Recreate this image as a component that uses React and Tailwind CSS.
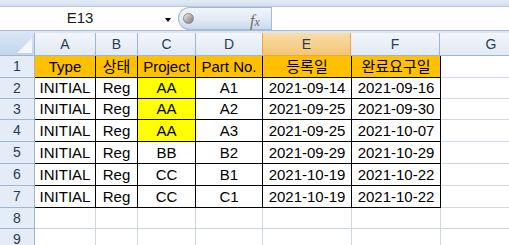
import React from "react";

const COLS = [
  { key: "A", w: 61 },
  { key: "B", w: 42 },
  { key: "C", w: 58 },
  { key: "D", w: 67 },
  { key: "E", w: 89 },
  { key: "F", w: 89 },
  { key: "G", w: 103 },
];

const ROW_H = [22, 21, 21, 22, 22, 22, 22, 21, 21];

const HEADER = ["Type", "상태", "Project", "Part No.", "등록일", "완료요구일"];

const DATA = [
  ["INITIAL", "Reg", "AA", "A1", "2021-09-14", "2021-09-16"],
  ["INITIAL", "Reg", "AA", "A2", "2021-09-25", "2021-09-30"],
  ["INITIAL", "Reg", "AA", "A3", "2021-09-25", "2021-10-07"],
  ["INITIAL", "Reg", "BB", "B2", "2021-09-29", "2021-10-29"],
  ["INITIAL", "Reg", "CC", "B1", "2021-10-19", "2021-10-22"],
  ["INITIAL", "Reg", "CC", "C1", "2021-10-19", "2021-10-22"],
];

const FONT = { fontFamily: '"Liberation Sans", "Noto Sans CJK KR", sans-serif' };

function FormulaBar() {
  return (
    <div className="flex flex-col">
      <div className="h-[7px] bg-gradient-to-b from-[#e3ecf7] to-[#d3dfee] border-b border-[#b9c9dd]" />
      <div className="flex h-[24px] bg-white border-b border-[#a9bcd3]">
        <div className="relative w-[178px] flex items-center">
          <span className="w-[160px] text-center text-[15px] text-[#1a1a1a]" style={FONT}>
            E13
          </span>
          <span className="absolute left-[165px] top-[11px] w-0 h-0 border-l-[3.5px] border-r-[3.5px] border-t-[4px] border-l-transparent border-r-transparent border-t-black" />
        </div>
        <div className="w-[93px] h-full rounded-l-[12px] border border-r-0 border-[#a7bad2] bg-gradient-to-b from-[#f1f5fb] via-[#e3ebf6] to-[#cbd9eb] flex items-center relative">
          <span className="ml-[4px] w-[11px] h-[11px] rounded-full bg-gradient-to-br from-[#f0f0f0] via-[#b0b0b0] to-[#7d7d7d] border border-[#8a8a8a]" />
          <span
            className="absolute left-[71px] top-[1px] text-[16px] italic text-[#6a6a6a]"
            style={{ fontFamily: '"Liberation Serif", serif' }}
          >
            f<span className="text-[12px]">x</span>
          </span>
        </div>
        <div className="flex-1 border-l border-[#a7bad2] bg-white" />
      </div>
      <div className="h-[2px] bg-[#dce6f3]" />
    </div>
  );
}

function ColumnHeader() {
  return (
    <div className="flex h-[23px]">
      <div className="relative w-[35px] shrink-0 bg-gradient-to-b from-[#d9e5f4] to-[#c3d5ec] border-r border-b border-[#9eb6ce]">
        <svg className="absolute right-[2px] bottom-[2px]" width="15" height="15" viewBox="0 0 15 15">
          <polygon points="15,0 15,15 0,15" fill="#f3f7fc" />
        </svg>
      </div>
      {COLS.map((c) => {
        const sel = c.key === "E";
        return (
          <div
            key={c.key}
            style={{ width: c.w, ...FONT }}
            className={
              sel
                ? "shrink-0 flex items-center justify-center text-[14px] text-[#283d55] bg-gradient-to-b from-[#f9dca6] to-[#f3c676] border-r border-b border-l border-[#f2a24a] -ml-px"
                : "shrink-0 flex items-center justify-center text-[14px] text-[#283d55] bg-gradient-to-b from-[#f3f6fb] to-[#e1e9f4] border-r border-b border-[#9eb6ce]"
            }
          >
            {c.key}
          </div>
        );
      })}
    </div>
  );
}

function Row({ n, h, cells }) {
  return (
    <div className="flex" style={{ height: h }}>
      <div
        className="w-[35px] shrink-0 flex items-center justify-center bg-[#e4ecf7] border-r border-b border-[#9eb6ce] text-[14px] text-[#283d55]"
        style={FONT}
      >
        {n}
      </div>
      {COLS.map((c, i) => {
        const val = cells ? cells[i] : undefined;
        const inTable = cells && i < 6;
        let bg = "bg-white";
        if (n === 1 && inTable) bg = "bg-[#ffc000]";
        else if (i === 2 && n >= 2 && n <= 4) bg = "bg-[#ffff00]";
        return (
          <div
            key={c.key}
            style={{ width: c.w, ...FONT }}
            className={
              "shrink-0 flex items-center justify-center pt-[1px] text-[15px] text-black whitespace-nowrap border-r border-b " +
              bg +
              (inTable ? " border-black" : " border-[#d0d7e5]")
            }
          >
            {val}
          </div>
        );
      })}
    </div>
  );
}

export default function App() {
  const rows = [HEADER, ...DATA, null, null];
  return (
    <div className="w-[509px] h-[245px] overflow-hidden bg-white select-none">
      <FormulaBar />
      <ColumnHeader />
      {rows.map((r, i) => (
        <Row key={i} n={i + 1} h={ROW_H[i]} cells={r} />
      ))}
    </div>
  );
}
